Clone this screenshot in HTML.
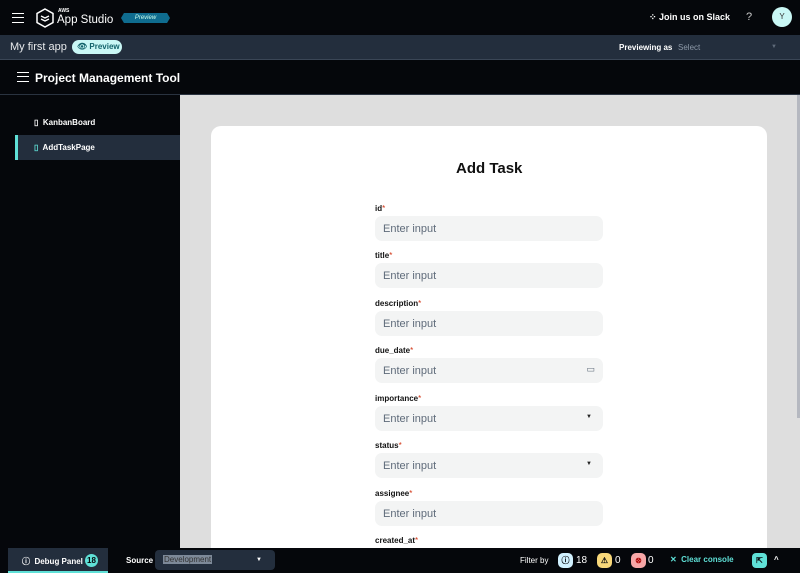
<!DOCTYPE html>
<html><head><style>
*{box-sizing:border-box;margin:0;padding:0}
body{width:800px;height:573px;overflow:hidden;font-family:"Liberation Sans",sans-serif;background:#dedede;position:relative}
.abs{position:absolute}
.top{left:0;top:0;width:800px;height:35px;background:#05070b}
.sub{left:0;top:35px;width:800px;height:25px;background:#232e3d;border-bottom:1px solid #3a4656}
.hdr{left:0;top:60px;width:800px;height:35px;background:#05070b;border-bottom:1px solid #2a3340}
.side{left:0;top:95px;width:180px;height:453px;background:#05070b}
.card{left:211px;top:126px;width:556px;height:440px;background:#fff;border-radius:10px}
.lbl{position:absolute;left:375px;font-size:8px;font-weight:bold;color:#111}
.lbl b{color:#d13212;font-weight:normal}
.inp{position:absolute;left:375px;width:228px;height:25px;background:#f3f4f4;border-radius:7px;font-size:11px;color:#5f6b7a;padding:7px 0 0 8px}
.bot{left:0;top:548px;width:800px;height:25px;background:#05070b;color:#fff;font-size:8px;font-weight:bold}
.ham{position:absolute;width:12px;height:10px;border-top:1.5px solid #fff;border-bottom:1.5px solid #fff}
.ham:after{content:"";position:absolute;left:0;right:0;top:3px;border-top:1.5px solid #fff}
</style></head><body>
<div class="abs top">
 <div class="ham" style="left:12px;top:13px"></div>
 <svg class="abs" style="left:36px;top:8px" width="18" height="20" viewBox="0 0 18 20"><path d="M9 1L17 5.5V14.5L9 19L1 14.5V5.5Z" fill="none" stroke="#fff" stroke-width="1.5"/><path d="M5 8L9 10L13 8M5 11L9 13L13 11" fill="none" stroke="#fff" stroke-width="1.3"/></svg>
 <div class="abs" style="left:58px;top:8px;font-size:5px;color:#fff;font-weight:bold">AWS</div>
 <div class="abs" style="left:57px;top:14px;font-size:11.5px;color:#fff">App Studio</div>
 <div class="abs" style="left:121px;top:13px;width:49px;height:10px;background:#0f6c8f;clip-path:polygon(6% 0,94% 0,100% 50%,94% 100%,6% 100%,0 50%);font-size:6px;color:#cfe;text-align:center;line-height:10px;font-style:italic">Preview</div>
 <div class="abs" style="left:649px;top:12px;font-size:9px;color:#fff;font-weight:bold">⁘ Join us on Slack</div>
 <div class="abs" style="left:746px;top:11px;font-size:11px;color:#ccc">?</div>
 <div class="abs" style="left:772px;top:7px;width:20px;height:20px;border-radius:50%;background:#c9f7f5;font-size:8px;text-align:center;line-height:20px;color:#333">Y</div>
</div>
<div class="abs sub">
 <div class="abs" style="left:10px;top:6px;font-size:11px;color:#e8eaec">My first app</div>
 <div class="abs" style="left:72px;top:5px;width:50px;height:14px;border-radius:7px;background:#c9f7f5;font-size:8px;font-weight:bold;color:#11626a;line-height:14px;padding-left:5px">👁 Preview</div>
 <div class="abs" style="left:619px;top:8px;font-size:8px;color:#fff;font-weight:bold">Previewing as</div>
 <div class="abs" style="left:678px;top:8px;font-size:8px;color:#8d99a8">Select</div>
 <div class="abs" style="left:771px;top:9px;font-size:6px;color:#5f6b7a">▼</div>
</div>
<div class="abs hdr">
 <div class="ham" style="left:17px;top:12px;width:12px"></div>
 <div class="abs" style="left:35px;top:11px;font-size:12px;color:#fff;font-weight:bold">Project Management Tool</div>
</div>
<div class="abs side">
 <div class="abs" style="left:34px;top:23px;font-size:8px;color:#fff;font-weight:bold">▯&nbsp; KanbanBoard</div>
 <div class="abs" style="left:15px;top:40px;width:165px;height:25px;background:#232e3d;border-left:3px solid #5fe0d7"></div>
 <div class="abs" style="left:34px;top:48px;font-size:8px;color:#fff;font-weight:bold"><span style="color:#5fe0d7">▯</span>&nbsp; AddTaskPage</div>
</div>
<div class="abs" style="left:797px;top:95px;width:3px;height:323px;background:#b5b8c0"></div>
<div class="abs card"></div>
<div class="abs" style="left:456px;top:160px;font-size:15px;font-weight:bold;color:#111">Add Task</div>
<div class="lbl" style="top:204px">id<b>*</b></div><div class="inp" style="top:216px">Enter input</div>
<div class="lbl" style="top:251px">title<b>*</b></div><div class="inp" style="top:263px">Enter input</div>
<div class="lbl" style="top:299px">description<b>*</b></div><div class="inp" style="top:311px">Enter input</div>
<div class="lbl" style="top:346px">due_date<b>*</b></div><div class="inp" style="top:358px">Enter input<span style="position:absolute;right:8px;top:6px;font-size:9px">▭</span></div>
<div class="lbl" style="top:394px">importance<b>*</b></div><div class="inp" style="top:406px">Enter input<span style="position:absolute;right:11px;top:8px;font-size:6px;color:#222">▼</span></div>
<div class="lbl" style="top:441px">status<b>*</b></div><div class="inp" style="top:453px">Enter input<span style="position:absolute;right:11px;top:8px;font-size:6px;color:#222">▼</span></div>
<div class="lbl" style="top:489px">assignee<b>*</b></div><div class="inp" style="top:501px">Enter input</div>
<div class="lbl" style="top:536px">created_at<b>*</b></div>
<div class="abs bot">
 <div class="abs" style="left:8px;top:0;width:100px;height:25px;background:#232e3d;border-bottom:2px solid #5fe0d7"></div>
 <div class="abs" style="left:22px;top:8px">ⓘ&nbsp; Debug Panel</div>
 <div class="abs" style="left:85px;top:6px;width:13px;height:13px;border-radius:50%;background:#5fe0d7;color:#05070b;text-align:center;line-height:13px">18</div>
 <div class="abs" style="left:126px;top:8px">Source</div>
 <div class="abs" style="left:155px;top:2px;width:120px;height:20px;background:#232e3d;border-radius:4px"></div>
 <div class="abs" style="left:163px;top:7px;font-weight:normal;color:#333;background:#7d8998;padding:0 1px">Development</div>
 <div class="abs" style="left:256px;top:9px;font-size:6px">▼</div>
 <div class="abs" style="left:520px;top:8px;font-weight:normal">Filter by</div>
 <div class="abs" style="left:558px;top:5px;width:15px;height:15px;border-radius:5px;background:#d1f1ff;color:#05070b;text-align:center;line-height:15px">ⓘ</div>
 <div class="abs" style="left:576px;top:7px;font-size:10px;font-weight:normal">18</div>
 <div class="abs" style="left:597px;top:5px;width:15px;height:15px;border-radius:5px;background:#f8d87a;color:#05070b;text-align:center;line-height:15px">⚠</div>
 <div class="abs" style="left:615px;top:7px;font-size:10px;font-weight:normal">0</div>
 <div class="abs" style="left:631px;top:5px;width:15px;height:15px;border-radius:5px;background:#f7a7a7;color:#a00;text-align:center;line-height:15px">⊗</div>
 <div class="abs" style="left:648px;top:7px;font-size:10px;font-weight:normal">0</div>
 <div class="abs" style="left:670px;top:7px;color:#5fe0d7">✕&nbsp; Clear console</div>
 <div class="abs" style="left:752px;top:5px;width:15px;height:15px;border-radius:4px;background:#5fe0d7;color:#05070b;text-align:center;line-height:15px">⇱</div>
 <div class="abs" style="left:774px;top:7px">^</div>
</div>
</body></html>
